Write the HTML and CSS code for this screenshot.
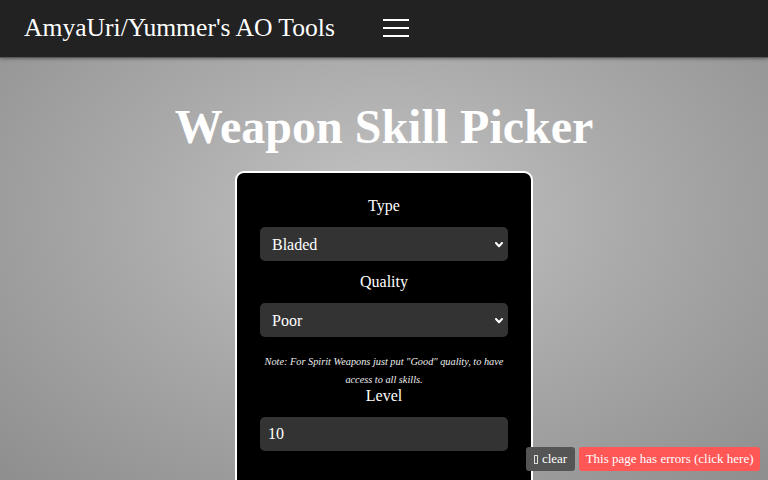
FILE: index.html
```html
<!DOCTYPE html>
<html lang="en">
<head>
<meta charset="utf-8">
<title>Weapon Skill Picker</title>
<link rel="stylesheet" href="styles.css">
</head>
<body>
<nav class="topbar">
  <span class="brand">AmyaUri/Yummer's AO Tools</span>
  <button class="menu-toggle" aria-label="Menu">
    <span></span><span></span><span></span>
  </button>
</nav>
<main class="page">
  <h1 class="title">Weapon Skill Picker</h1>
  <section class="card">
    <label class="field-label" for="type">Type</label>
    <div class="select-wrap">
      <select id="type" class="control">
        <option>Bladed</option>
        <option>Blunt</option>
        <option>Pistol</option>
      </select>
      <svg class="chevron" viewBox="0 0 8 6" width="8" height="6"><path d="M1 1 4 4.2 7 1" fill="none" stroke="#fff" stroke-width="2" stroke-linecap="round" stroke-linejoin="round"/></svg>
    </div>
    <label class="field-label" for="quality">Quality</label>
    <div class="select-wrap">
      <select id="quality" class="control">
        <option>Poor</option>
        <option>Good</option>
      </select>
      <svg class="chevron" viewBox="0 0 8 6" width="8" height="6"><path d="M1 1 4 4.2 7 1" fill="none" stroke="#fff" stroke-width="2" stroke-linecap="round" stroke-linejoin="round"/></svg>
    </div>
    <p class="note">Note: For Spirit Weapons just put "Good" quality, to have access to all skills.</p>
    <label class="field-label level-label" for="level">Level</label>
    <input id="level" class="control number" type="text" value="10">
  </section>
</main>
<div class="error-bar">
  <button class="clear-btn"><span class="glyph"></span> clear</button>
  <button class="error-btn">This page has errors (click here)</button>
</div>
</body>
</html>
```
FILE: styles.css
```css
* { box-sizing: border-box; }

html, body {
  margin: 0;
  height: 100%;
}

body {
  font-family: "Liberation Serif", "Times New Roman", serif;
  color: #fff;
  background: radial-gradient(ellipse at 50% 45%, #c4c4c4 0%, #aaaaaa 45%, #8e8e8e 100%);
  overflow: hidden;
}

.topbar {
  height: 58px;
  background: #222;
  border-bottom: 1px solid #5a5a5a;
  box-shadow: 0 1px 3px rgba(0, 0, 0, 0.35);
  display: flex;
  align-items: center;
  padding: 0 24px;
  position: relative;
  z-index: 1;
}

.brand {
  font-size: 25.6px;
  line-height: 1;
  color: #fff;
  margin-top: -2px;
}

.menu-toggle {
  margin-left: 48px;
  width: 26px;
  height: 18px;
  padding: 0;
  border: 0;
  background: none;
  display: flex;
  flex-direction: column;
  justify-content: space-between;
  margin-top: -2px;
}

.menu-toggle span {
  display: block;
  height: 2px;
  width: 26px;
  background: #fff;
}

.page {
  display: flex;
  flex-direction: column;
  align-items: center;
}

.title {
  margin: 41px 0 16px;
  font-size: 48px;
  line-height: 56px;
  font-weight: bold;
  color: #fff;
}

.card {
  width: 298px;
  background: #000;
  border: 2px solid #fff;
  border-radius: 9px;
  padding: 21px 23px 40px;
  display: flex;
  flex-direction: column;
}

.field-label {
  display: block;
  text-align: center;
  font-size: 16px;
  line-height: 24px;
  margin-bottom: 9px;
}

.select-wrap {
  position: relative;
  margin-bottom: 9px;
}

.control {
  display: block;
  width: 100%;
  height: 34px;
  border: 0;
  border-radius: 5px;
  background: #333;
  color: #fff;
  font-family: "Liberation Serif", "Times New Roman", serif;
  font-size: 16px;
  padding: 0 12px;
  appearance: none;
  -webkit-appearance: none;
  outline: none;
}

.chevron {
  position: absolute;
  right: 5px;
  top: 15px;
  pointer-events: none;
}

.note {
  margin: 7px 0 0;
  text-align: center;
  font-style: italic;
  font-size: 10.3px;
  line-height: 18px;
  color: #eee;
}

.level-label {
  line-height: 16px;
  margin: -1px 0 13px;
}

.number {
  padding: 0 8px;
}

.error-bar {
  position: fixed;
  right: 8px;
  bottom: 9px;
  display: flex;
  gap: 4px;
}

.error-bar button {
  height: 24px;
  border: 0;
  border-radius: 3px;
  color: #fff;
  font-family: "Liberation Serif", "Times New Roman", serif;
  font-size: 13px;
  padding: 0 8px;
}

.clear-btn {
  background: #555;
  display: flex;
  align-items: center;
  gap: 4px;
}

.glyph {
  display: inline-block;
  width: 4px;
  height: 9px;
  border: 1px solid #ddd;
}

.error-bar .error-btn {
  background: #ff5656;
  padding: 0 6.5px;
}
```
